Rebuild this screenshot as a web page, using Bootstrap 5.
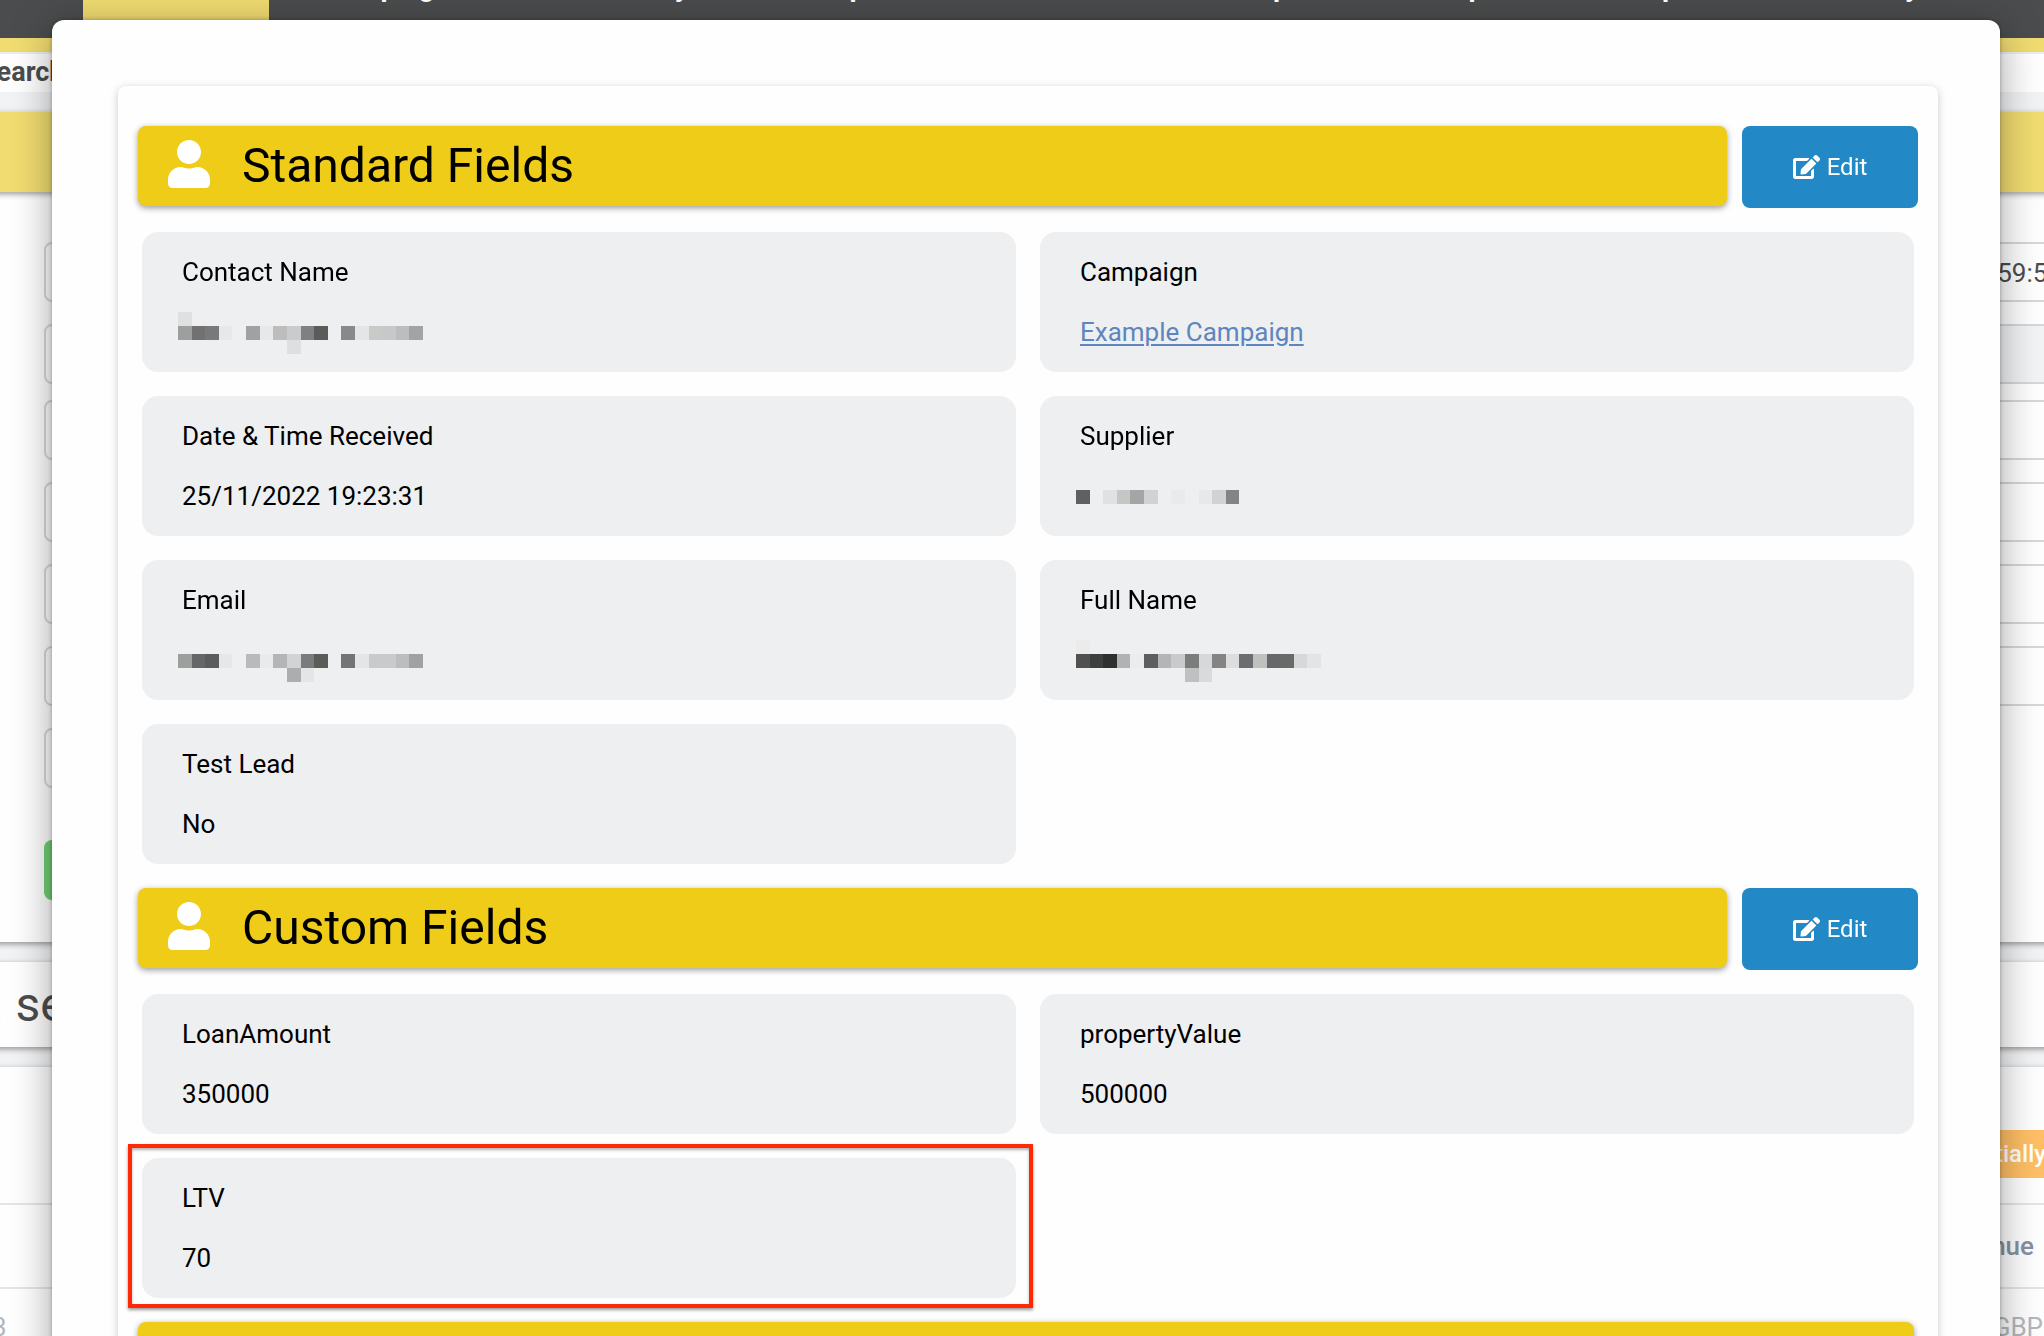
<!DOCTYPE html>
<html lang="en">
<head>
<meta charset="utf-8">
<meta name="viewport" content="width=device-width, initial-scale=1">
<title>Lead details</title>
<link href="https://cdn.jsdelivr.net/npm/bootstrap@5.3.0/dist/css/bootstrap.min.css" rel="stylesheet">
<style>
  body { font-family: Roboto, "Liberation Sans", sans-serif; font-size: 26px; line-height: 40px; color: #000; background: #f2f3f5; height: 100vh; overflow: hidden; }

  /* page behind the dialog */
  .backpage { margin: 0 -40px 0 -20px; color: #4b4c4e; }
  .topbar { height: 38px; background: #4b4c4d; color: #fff; font-size: 28px; font-weight: 700; padding: 0 60px 0 103px; }
  .topbar-active { width: 186px; background: #f1dc71; }
  .topbar-nav { margin-top: -33px; }
  .topbar-nav a { width: 196px; color: #fff; text-decoration: none; white-space: nowrap; }
  .topbar-first { padding-left: 54px; }
  .stripe { height: 14px; background: #f1dc71; }
  .crumbs { height: 40px; background: #fefefe; border-top: 2px solid #ececee; font-size: 27px; font-weight: 700; line-height: 36px; }
  .band { height: 80px; background: #f1dc71; margin-top: 20px; box-shadow: 0 2px 6px rgba(0,0,0,.4); position: relative; }
  .sheet { background: #fefefe; box-shadow: 0 2px 6px rgba(0,0,0,.4); }
  .filters { height: 750px; padding: 50px 0 0 64px; }
  .filters .form-control { height: 60px; border: 2px solid #d6d7d9; border-radius: 8px; padding-top: 8px; font-size: 26px; color: #4b4c4e; background: #fefefe; margin-bottom: 22px; }
  .filters .form-control:disabled { background: #f2f3f5; }
  .filters .tight .form-control { margin-bottom: 16px; }
  .filters .date-end { text-align: right; padding-right: 20px; }
  .go { height: 60px; width: 180px; margin-top: 30px; border: 0; border-radius: 8px; background: #70ce75; color: #fff; font-size: 26px; }
  .summary { height: 85px; margin-top: 20px; padding-left: 11px; font-size: 48px; line-height: 86px; }
  .results { margin-top: 20px; }
  .status-row { height: 136px; padding-top: 63px; }
  .status-tag { height: 48px; padding: 0 38px; background: #ffbf66; color: #fff; font-weight: 500; font-size: 24px; line-height: 48px; }
  .results table { width: 100%; }
  .results th, .results td { height: 84px; border-top: 2px solid #e4e5e7; padding: 0 51px 0 12px; }
  .results th { color: #8690a3; font-weight: 500; }
  .results td { height: 76px; color: #b2b7bd; }
  .results .num { text-align: right; padding: 0 41px 0 0; }
  .results th.num { padding-right: 50px; }

  /* dialog */
  .lead-dialog { max-width: none; margin: 20px 44px 0 52px; }
  .lead-dialog .modal-content { border: 0; border-radius: 12px; background: #fefefe; color: #000; padding: 66px 62px 0 66px; box-shadow: 0 0 4px rgba(0,0,0,.3), 0 8px 40px rgba(0,0,0,.36); }
  .lead-panel { border-radius: 8px; background: #fefefe; padding: 40px 20px; box-shadow: 0 2px 8px rgba(0,0,0,.22); }
  .bar { height: 80px; border-radius: 8px; background: #eecc18; padding: 0 30px; box-shadow: 0 2px 6px rgba(0,0,0,.4); }
  .bar h2 { margin: 0 0 0 32px; font-size: 48px; font-weight: 400; line-height: 80px; }
  .bar svg { width: 42px; height: 48px; margin-bottom: 4px; }
  .edit-btn { width: 176px; height: 82px; margin-left: 15px; border: 0; border-radius: 8px; background: #2388c6; color: #fff; font-size: 24px; gap: 7px; }
  .edit-btn svg { width: 27px; height: 24px; }
  .field { height: 140px; border-radius: 16px; background: #eeeff1; padding: 20px 40px; margin: 0; position: relative; }
  .field dt { font-weight: 400; margin-bottom: 20px; }
  .field dd { height: 40px; margin: 0; }
  .field a { color: #5e85bd; text-underline-offset: 3px; }
  .masked { display: block; width: 245px; height: 42px; margin-left: -4px; shape-rendering: crispEdges; }
  .flagged::after { content: ""; position: absolute; inset: -14px -17px -10px -14px; border: 4px solid #ff2a05; box-shadow: 0 2px 3px rgba(0,0,0,.4), inset 0 2px 3px rgba(0,0,0,.3); }
</style>
<script src="https://cdn.jsdelivr.net/npm/bootstrap@5.3.0/dist/js/bootstrap.bundle.min.js"></script>
</head>
<body>
<svg class="d-none" xmlns="http://www.w3.org/2000/svg">
  <symbol id="user" viewBox="0 0 448 512"><path fill="currentColor" d="M224 256c70.700 0 128-57.300 128-128S294.700 0 224 0 96 57.300 96 128s57.300 128 128 128zm89.600 32h-16.700c-22.200 10.200-46.900 16-72.900 16s-50.600-5.800-72.900-16h-16.700C60.200 288 0 348.200 0 422.400V464c0 26.500 21.500 48 48 48h352c26.500 0 48-21.500 48-48v-41.600c0-74.200-60.200-134.400-134.400-134.400z"/></symbol>
  <symbol id="pen" viewBox="0 0 576 512"><path fill="currentColor" d="M402.600 83.200l90.200 90.200c3.800 3.800 3.800 10 0 13.800L274.400 405.600l-92.800 10.300c-12.400 1.400-22.900-9.100-21.500-21.500l10.300-92.800L388.800 83.200c3.800-3.800 10-3.800 13.800 0zm162-22.900l-48.800-48.800c-15.200-15.200-39.900-15.200-55.200 0l-35.400 35.400c-3.800 3.800-3.800 10 0 13.800l90.200 90.200c3.800 3.800 10 3.800 13.800 0l35.400-35.400c15.200-15.300 15.200-40 0-55.200zM384 346.200V448H64V128h229.800c3.200 0 6.200-1.300 8.500-3.500l40-40c7.600-7.600 2.200-20.500-8.500-20.500H48C21.500 64 0 85.500 0 112v352c0 26.500 21.500 48 48 48h352c26.500 0 48-21.500 48-48V306.200c0-10.700-12.900-16-20.500-8.500l-40 40c-2.200 2.300-3.500 5.300-3.500 8.500z"/></symbol>
</svg>

<div class="backpage">
  <header class="topbar d-flex">
    <div class="topbar-active"></div>
    <nav class="topbar-nav topbar-first d-flex">
      <a href="#">Campaigns</a><a href="#">Lead Delivery</a><a href="#">Partner Reports</a>
    </nav>
    <nav class="topbar-nav d-flex ms-auto">
      <a href="#">Reports</a><a href="#">Import</a><a href="#">Export</a><a href="#">History</a>
    </nav>
  </header>
  <div class="stripe"></div>
  <div class="crumbs">Search</div>
  <div class="band"></div>
  <form class="sheet filters">
    <div class="row g-0">
      <div class="col-6 pe-4"><input class="form-control" aria-label="From"></div>
      <div class="col-6"><input class="form-control date-end" aria-label="To" value="23:59:59"></div>
    </div>
    <div class="row g-0 tight">
      <div class="col-6 pe-4"><input class="form-control" aria-label="Reference"></div>
      <div class="col-6"><input class="form-control" aria-label="Buyer" disabled></div>
    </div>
    <div class="row g-0">
      <div class="col-6 pe-4"><input class="form-control" aria-label="Campaign"></div>
      <div class="col-6"><input class="form-control" aria-label="Supplier"></div>
      <div class="col-6 pe-4"><input class="form-control" aria-label="Name"></div>
      <div class="col-6"><input class="form-control" aria-label="Email"></div>
      <div class="col-6 pe-4"><input class="form-control" aria-label="Phone"></div>
      <div class="col-6"><input class="form-control" aria-label="Postcode"></div>
      <div class="col-6 pe-4"><input class="form-control" aria-label="Status"></div>
      <div class="col-6"><input class="form-control" aria-label="Source"></div>
      <div class="col-6 pe-4"><input class="form-control" aria-label="Tag"></div>
    </div>
    <button type="button" class="go" aria-label="Search"></button>
  </form>
  <div class="sheet summary">. sellers</div>
  <div class="sheet results">
    <div class="status-row d-flex justify-content-end"><span class="status-tag">Partially</span></div>
    <table>
      <thead><tr><th></th><th class="num">Revenue</th></tr></thead>
      <tbody><tr><td>3</td><td class="num">GBP</td></tr></tbody>
    </table>
  </div>
</div>

<div class="modal d-block overflow-hidden" role="dialog" aria-label="Lead details">
  <div class="modal-dialog lead-dialog">
    <div class="modal-content">
      <div class="lead-panel d-flex flex-column gap-4">
        <div class="d-flex">
          <div class="bar d-flex align-items-center flex-grow-1 text-black"><svg class="text-white"><use href="#user"/></svg><h2>Standard Fields</h2></div>
          <button type="button" class="edit-btn d-flex align-items-center justify-content-center"><svg><use href="#pen"/></svg>Edit</button>
        </div>
        <div class="px-1">
          <div class="row g-4">
            <div class="col-6"><dl class="field"><dt>Contact Name</dt><dd data-mask="contact"></dd></dl></div>
            <div class="col-6"><dl class="field"><dt>Campaign</dt><dd><a href="#">Example Campaign</a></dd></dl></div>
            <div class="col-6"><dl class="field"><dt>Date &amp; Time Received</dt><dd>25/11/2022 19:23:31</dd></dl></div>
            <div class="col-6"><dl class="field"><dt>Supplier</dt><dd data-mask="supplier"></dd></dl></div>
            <div class="col-6"><dl class="field"><dt>Email</dt><dd data-mask="email"></dd></dl></div>
            <div class="col-6"><dl class="field"><dt>Full Name</dt><dd data-mask="fullname"></dd></dl></div>
            <div class="col-6"><dl class="field"><dt>Test Lead</dt><dd>No</dd></dl></div>
          </div>
        </div>
        <div class="d-flex">
          <div class="bar d-flex align-items-center flex-grow-1 text-black"><svg class="text-white"><use href="#user"/></svg><h2>Custom Fields</h2></div>
          <button type="button" class="edit-btn d-flex align-items-center justify-content-center"><svg><use href="#pen"/></svg>Edit</button>
        </div>
        <div class="px-1">
          <div class="row g-4">
            <div class="col-6"><dl class="field"><dt>LoanAmount</dt><dd>350000</dd></dl></div>
            <div class="col-6"><dl class="field"><dt>propertyValue</dt><dd>500000</dd></dl></div>
            <div class="col-6"><dl class="field flagged"><dt>LTV</dt><dd>70</dd></dl></div>
          </div>
        </div>
        <div class="bar me-1"></div>
      </div>
    </div>
  </div>
</div>

<script>
  // Redacted values: three rows of blocks, "column:colour" in each row
  const masks = {
    contact: ["0:dfe0e2", "0:9d9f9e 1:717171 2:787a79 3:e7e8e9 5:9fa1a3 6:e7e8e9 7:bdbdbd 8:c9cbcc 9:7e8082 10:5a5c5a 12:87898b 13:e4e5e7 14:c8cac8 15:c6c8ca 16:bcbdbd 17:a2a3a5", "8:dddfe1"],
    email: ["", "0:9d9f9e 1:646668 2:5b5c5e 3:e6e8e7 5:b9babc 6:e9eaec 7:b4b5b7 8:d2d3d5 9:7a7b7d 10:5a5c5a 12:737476 13:e4e5e7 14:c9cacc 15:c9cacc 16:bcbdbf 17:a1a1a1", "8:acadaf 9:e4e5e7"],
    supplier: ["", "0:606060 2:e0e1e3 3:c5c7c5 4:a4a5a7 5:d1d2d4 7:e9eaeb 9:e7e8e9 10:d1d2d4 11:848484", ""],
    fullname: ["0:eaebea", "0:505050 1:3d3f3e 2:2e302f 3:b1b2b4 4:ebecee 5:5e5e5e 6:b4b5b7 7:c9cacc 8:7b7d7c 9:d7d8da 10:848484 11:dcdddc 12:6c6d6f 13:bfc1bf 14:66686a 15:686a69 16:d7d8da 17:e3e4e6", "8:bfc0c2 9:d9dadc"]
  };
  document.querySelectorAll("[data-mask]").forEach(el => {
    const rects = masks[el.dataset.mask].map((row, y) => row.split(" ").filter(Boolean).map(c => {
      const [x, fill] = c.split(":");
      return `<rect x="${x}" y="${y}" width="1" height="1" fill="#${fill}"/>`;
    }).join("")).join("");
    el.innerHTML = `<svg class="masked" viewBox="0 0 18 3" preserveAspectRatio="none" role="img" aria-label="Redacted">${rects}</svg>`;
  });
</script>
</body>
</html>
